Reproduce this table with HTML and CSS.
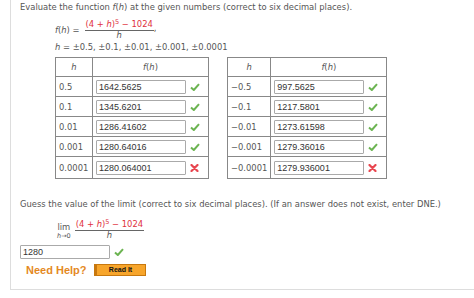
FILE: index.html
```html
<!DOCTYPE html>
<html lang="en">

<head>
    <meta charset="UTF-8">
    <title>Limit Question</title>
    <link rel="stylesheet" href="styles.css">
</head>

<body>
    <div class="panel">
        <p class="prompt">Evaluate the function <i>f</i>(<i>h</i>) at the given numbers (correct to six decimal places).</p>

        <div class="formula">
            <span class="lhs"><i>f</i>(<i>h</i>) =</span>
            <span class="frac">
                <span class="num">(4 + <i>h</i>)<sup>5</sup> &minus; 1024</span>
                <span class="den"><i>h</i></span>
            </span>
            <span class="comma">,</span>
        </div>
        <p class="hvals"><i>h</i> = &plusmn;0.5, &plusmn;0.1, &plusmn;0.01, &plusmn;0.001, &plusmn;0.0001</p>

        <div class="tables">
            <table class="vals left">
                <tr><th class="hcol"><i>h</i></th><th><i>f</i>(<i>h</i>)</th></tr>
                <tr><td class="hcol">0.5</td><td><span class="ans">1642.5625</span><span class="ok"></span></td></tr>
                <tr><td class="hcol">0.1</td><td><span class="ans">1345.6201</span><span class="ok"></span></td></tr>
                <tr><td class="hcol">0.01</td><td><span class="ans">1286.41602</span><span class="ok"></span></td></tr>
                <tr><td class="hcol">0.001</td><td><span class="ans">1280.64016</span><span class="ok"></span></td></tr>
                <tr><td class="hcol">0.0001</td><td><span class="ans">1280.064001</span><span class="bad"></span></td></tr>
            </table>

            <table class="vals right">
                <tr><th class="hcol"><i>h</i></th><th><i>f</i>(<i>h</i>)</th></tr>
                <tr><td class="hcol">&minus;0.5</td><td><span class="ans">997.5625</span><span class="ok"></span></td></tr>
                <tr><td class="hcol">&minus;0.1</td><td><span class="ans">1217.5801</span><span class="ok"></span></td></tr>
                <tr><td class="hcol">&minus;0.01</td><td><span class="ans">1273.61598</span><span class="ok"></span></td></tr>
                <tr><td class="hcol">&minus;0.001</td><td><span class="ans">1279.36016</span><span class="ok"></span></td></tr>
                <tr><td class="hcol">&minus;0.0001</td><td><span class="ans">1279.936001</span><span class="bad"></span></td></tr>
            </table>
        </div>

        <p class="prompt second">Guess the value of the limit (correct to six decimal places). (If an answer does not exist, enter DNE.)</p>

        <div class="limit">
            <span class="lim">lim<span class="under"><i>h</i>&rarr;0</span></span>
            <span class="frac">
                <span class="num">(4 + <i>h</i>)<sup>5</sup> &minus; 1024</span>
                <span class="den"><i>h</i></span>
            </span>
        </div>

        <div class="answer">
            <span class="ans wide">1280</span><span class="ok"></span>
        </div>

        <div class="help">
            <span class="need">Need Help?</span>
            <span class="readit">Read It</span>
        </div>
    </div>

    <script>
        // put the same tick / cross icon into every marker
        const tick = '<svg width="10" height="8" viewBox="0 0 10 8"><path d="M1 4.5 L3.8 7 L9 1.2" fill="none" stroke="#6cb452" stroke-width="2" stroke-linejoin="round"/></svg>';
        const cross = '<svg width="9" height="8" viewBox="0 0 9 8"><path d="M1.5 1 L7.5 7 M7.5 1 L1.5 7" stroke="#e8464f" stroke-width="2.2" stroke-linecap="round"/></svg>';
        document.querySelectorAll('.ok').forEach(el => el.innerHTML = tick);
        document.querySelectorAll('.bad').forEach(el => el.innerHTML = cross);
    </script>
</body>

</html>
```

FILE: styles.css
```css
body {
    margin: 0;
    background-color: #fff;
    font-family: 'DejaVu Sans', Verdana, sans-serif;
    font-size: 8.4px;
    color: #555;
}

.panel {
    margin-left: 10px;
    height: 290px;
    padding: 2px 0 0 9px;
    border-left: 1px solid #ddd;
    border-bottom: 1px solid #ddd;
    box-sizing: border-box;
}

.prompt {
    margin: 0;
    line-height: 10px;
}

.formula {
    display: flex;
    align-items: center;
    margin: 8px 0 0 35px;
}

.lhs {
    margin-right: 5px;
}

.frac {
    display: inline-flex;
    flex-direction: column;
    align-items: center;
}

.frac .num {
    color: #e0303c;
    padding: 0 1px 1px;
    border-bottom: 1px solid #666;
    line-height: 9px;
}

.frac sup {
    font-size: 6.5px;
    line-height: 0;
    vertical-align: 3px;
}

.frac .den {
    line-height: 9px;
}

.comma {
    align-self: flex-end;
    margin-bottom: 7px;
}

.hvals {
    margin: 2px 0 0 35px;
    line-height: 10px;
}

.tables {
    display: flex;
    gap: 18px;
    margin: 5px 0 0 35px;
}

.vals {
    border-collapse: collapse;
    border: 1px solid #666;
}

.vals th,
.vals td {
    border: 1px solid #888;
    padding: 0 3px;
    height: 19px;
    white-space: nowrap;
}

.vals th {
    font-weight: normal;
    height: 18px;
    text-align: center;
}

.vals tr:last-child td {
    height: 21px;
}

.vals td.hcol {
    text-align: left;
}

.left .hcol {
    width: 30px;
}

.right .hcol {
    width: 35px;
}

.vals td:last-child {
    padding-right: 8px;
}

.ans {
    display: inline-block;
    vertical-align: middle;
    width: 90px;
    height: 14px;
    padding-left: 2px;
    box-sizing: border-box;
    border: 1px solid #aaa;
    border-radius: 1px;
    font-family: 'Liberation Sans', Arial, sans-serif;
    font-size: 9px;
    line-height: 12px;
    color: #333;
}

.ok,
.bad {
    display: inline-block;
    vertical-align: middle;
    margin-left: 4px;
    line-height: 0;
}

.second {
    margin-top: 20px;
}

.limit {
    display: flex;
    align-items: center;
    margin: 10px 0 0 37px;
}

.lim {
    display: inline-flex;
    flex-direction: column;
    align-items: center;
    line-height: 9px;
    margin-right: 4px;
    margin-top: 4px;
}

.lim .under {
    font-size: 6.5px;
    line-height: 8px;
}

.answer {
    margin-top: 5px;
    display: flex;
    align-items: center;
}

.answer .ans.wide {
    width: 90px;
}

.help {
    display: flex;
    align-items: center;
    margin: 5px 0 0 6px;
}

.need {
    font-family: 'Liberation Sans', Arial, sans-serif;
    font-weight: bold;
    font-size: 11px;
    color: #e4891f;
    margin-right: 7px;
}

.readit {
    display: inline-block;
    width: 52px;
    height: 12px;
    box-sizing: border-box;
    background-color: #f7a52b;
    border: 1px solid #c8780e;
    border-left-width: 3px;
    font-family: 'Liberation Sans', Arial, sans-serif;
    font-weight: bold;
    font-size: 7px;
    line-height: 10px;
    text-align: center;
    color: #111;
}
```
